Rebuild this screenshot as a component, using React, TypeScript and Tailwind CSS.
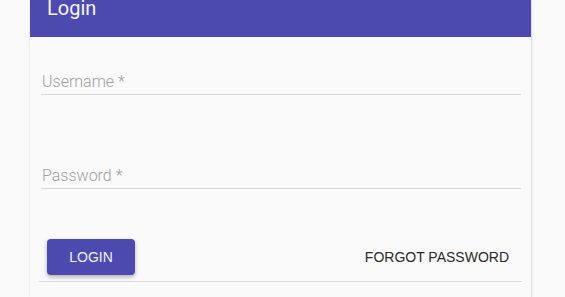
import React from 'react';

export default function App() {
    return (
        <div className="min-h-[297px] w-[565px] bg-[#fafafa] font-['Roboto',sans-serif] overflow-hidden">
            <div className="ml-[30px] w-[502px] h-[297px] bg-[#fafafa] border-r border-[#e2e2e2] shadow-[0_0_2px_rgba(0,0,0,0.12)]">
                <div className="h-[37px] bg-[#4d4aaf] overflow-hidden px-[17px]">
                    <h2 className="text-[20px] leading-[24px] -mt-[4px] text-[#f4f4ff] font-normal">Login</h2>
                </div>

                <div className="px-[11px] pr-[10px]">
                    <div className="mt-[33px] border-b border-[#d9d9d9]">
                        <label className="block pl-[1px] text-[16px] leading-[24px] font-light text-[#a0a0a0]">Username *</label>
                    </div>
                    <div className="mt-[69px] border-b border-[#d9d9d9]">
                        <label className="block pl-[1px] text-[16px] leading-[24px] font-light text-[#a0a0a0]">Password *</label>
                    </div>
                </div>

                <div className="mx-[9px] mt-[50px] pb-[6px] border-b border-[#dcdcdc] flex items-center justify-between pl-[8px] pr-[13px] font-['Liberation_Sans',Arial,sans-serif]">
                    <button className="w-[88px] h-[36px] rounded-[4px] bg-[#4d4aaf] text-[#f0f0ff] text-[14px] uppercase shadow-[0_2px_4px_rgba(0,0,0,0.3)]">
                        Login
                    </button>
                    <button className="text-[14px] text-[#2a2a2a] uppercase">
                        Forgot Password
                    </button>
                </div>
            </div>
        </div>
    );
}
